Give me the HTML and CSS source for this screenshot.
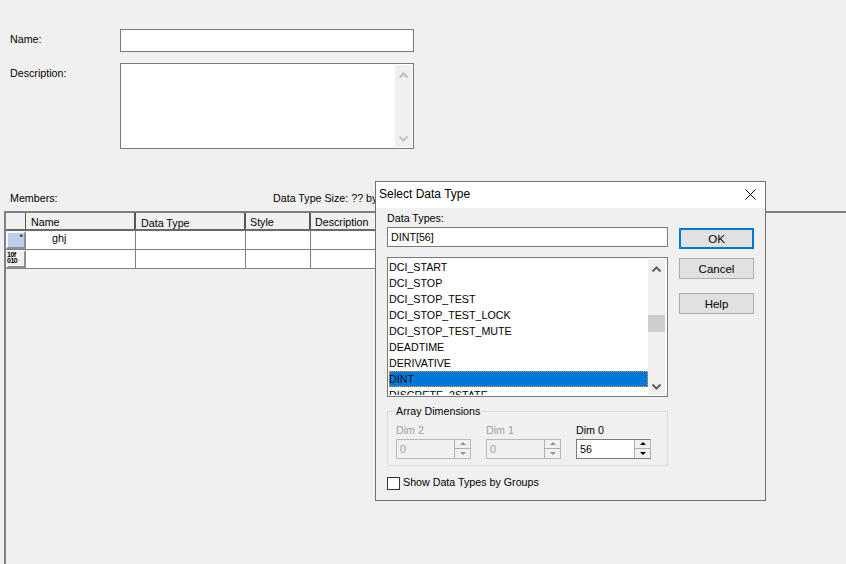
FILE: index.html
```html
<!DOCTYPE html>
<html lang="en">
  <head>
    <meta charset="UTF-8" />
    <title>New Data Type</title>
    <link rel="stylesheet" href="styles.css">
  </head>
  <body>
    <div class="form-row name-row">
      <label class="form-label">Name:</label>
      <div class="text-box name-box"></div>
    </div>
    <div class="form-row desc-row">
      <label class="form-label">Description:</label>
      <div class="text-box desc-box">
        <div class="scrollbar disabled">
          <svg width="11" height="7" viewBox="0 0 11 7"><path d="M1.5 5.5 5.5 1.5l4 4" /></svg>
          <svg width="11" height="7" viewBox="0 0 11 7"><path d="M1.5 1.5l4 4 4-4" /></svg>
        </div>
      </div>
    </div>

    <div class="members-head">
      <span class="members-label">Members:</span>
      <span class="size-label">Data Type Size: ?? by</span>
    </div>

    <div class="members">
      <div class="grid-row head-row">
        <div class="cell row-head"></div>
        <div class="cell col-name">Name</div>
        <div class="cell col-type"><span class="low">Data Type</span></div>
        <div class="cell col-style">Style</div>
        <div class="cell col-desc">Description</div>
      </div>
      <div class="grid-row">
        <div class="cell row-head current"><span class="star">*</span></div>
        <div class="cell col-name ghj">ghj</div>
        <div class="cell col-type"></div>
        <div class="cell col-style"></div>
        <div class="cell col-desc"></div>
      </div>
      <div class="grid-row">
        <div class="cell row-head"><span class="bits">10f<br>010</span></div>
        <div class="cell col-name"></div>
        <div class="cell col-type"></div>
        <div class="cell col-style"></div>
        <div class="cell col-desc"></div>
      </div>
    </div>

    <div class="dialog">
      <div class="title-bar">
        <span>Select Data Type</span>
        <svg class="close" width="11" height="11" viewBox="0 0 11 11"><path d="M.5.5l10 10M10.5.5l-10 10" /></svg>
      </div>
      <div class="dialog-body">
        <div class="dialog-main">
          <label class="types-label">Data Types:</label>
          <div class="text-box types-box">DINT[56]</div>
          <div class="text-box type-list">
            <ul class="types">
              <li>DCI_START</li>
              <li>DCI_STOP</li>
              <li>DCI_STOP_TEST</li>
              <li>DCI_STOP_TEST_LOCK</li>
              <li>DCI_STOP_TEST_MUTE</li>
              <li>DEADTIME</li>
              <li>DERIVATIVE</li>
              <li class="selected">DINT</li>
              <li>DISCRETE_2STATE</li>
            </ul>
            <div class="scrollbar list-scroll">
              <svg width="11" height="7" viewBox="0 0 11 7"><path d="M1.5 5.5 5.5 1.5l4 4" /></svg>
              <div class="thumb"></div>
              <svg width="11" height="7" viewBox="0 0 11 7"><path d="M1.5 1.5l4 4 4-4" /></svg>
            </div>
          </div>
          <fieldset class="dims">
            <legend>Array Dimensions</legend>
            <div class="dim off">
              <label>Dim 2</label>
              <div class="spin">
                <span class="spin-value">0</span>
                <div class="spin-btns"><i class="up"></i><i class="down"></i></div>
              </div>
            </div>
            <div class="dim off">
              <label>Dim 1</label>
              <div class="spin">
                <span class="spin-value">0</span>
                <div class="spin-btns"><i class="up"></i><i class="down"></i></div>
              </div>
            </div>
            <div class="dim">
              <label>Dim 0</label>
              <div class="spin">
                <span class="spin-value">56</span>
                <div class="spin-btns"><i class="up"></i><i class="down"></i></div>
              </div>
            </div>
          </fieldset>
          <div class="check-row">
            <span class="check"></span>
            <span class="check-label">Show Data Types by Groups</span>
          </div>
        </div>
        <div class="dialog-buttons">
          <button class="button default">OK</button>
          <button class="button">Cancel</button>
          <button class="button help">Help</button>
        </div>
      </div>
    </div>
  </body>
</html>
```

FILE: styles.css
```css
* {
  box-sizing: border-box;
}
html, body {
  height: 564px;
  overflow: hidden;
}
body {
  margin: 0;
  background: #f0f0f0;
  color: #000;
  font-family: "Liberation Sans", Arial, sans-serif;
  font-size: 10.7px;
}
.form-row {
  display: flex;
  padding-left: 10px;
}
.name-row {
  padding-top: 29px;
}
.desc-row {
  margin-top: 11px;
}
.form-label {
  width: 110px;
  padding-top: 4px;
}
.text-box {
  background: #fff;
  border: 1px solid #7a7a7a;
}
.name-box {
  width: 294px;
  height: 23px;
}
.desc-box {
  display: flex;
  justify-content: flex-end;
  width: 294px;
  height: 86px;
  padding: 1px;
}
.scrollbar {
  display: flex;
  flex-direction: column;
  justify-content: space-between;
  align-items: center;
  width: 17px;
  padding: 7px 0 5px;
  background: #f0f0f0;
}
.scrollbar svg {
  fill: none;
  stroke: #606060;
  stroke-width: 2;
}
.scrollbar.disabled svg {
  stroke: #c0c0c0;
}

.members-head {
  display: flex;
  height: 15px;
  margin-top: 42px;
  padding: 1px 0 0 10px;
}
.members-label {
  width: 263px;
}
.members {
  height: 360px;
  margin: 5px 0 0 4px;
  border-top: 2px solid #808080;
  border-left: 2px solid #808080;
}
.grid-row {
  display: flex;
  width: 700px;
  height: 19px;
  border-bottom: 1px solid #808080;
}
.head-row {
  height: 18px;
  border-bottom: 2px solid #696969;
}
.cell {
  height: 100%;
  padding: 1px 0 0 5px;
  border-right: 1px solid #808080;
  background: #fff;
}
.head-row .cell {
  padding-top: 3px;
  background: #f0f0f0;
  border-right: 2px solid #555;
}
.row-head {
  position: relative;
  width: 20px;
  padding: 0;
  background: #f0f0f0;
  border: 2px solid #f6f6f6;
  border-right-color: #909090;
  border-bottom-color: #909090;
}
.head-row .row-head {
  padding: 0;
  border: 0;
  border-right: 1px solid #555;
}
.current {
  background: #bccfeb;
}
.star {
  position: absolute;
  top: 0;
  right: 1px;
  font-size: 9px;
  line-height: 9px;
}
.bits {
  display: block;
  margin: 0 0 0 -1px;
  font-size: 7px;
  font-weight: bold;
  letter-spacing: -0.5px;
  line-height: 6px;
}
.col-name,
.col-type {
  width: 110px;
}
.col-style {
  width: 65px;
  padding-left: 4px;
}
.col-desc {
  width: 395px;
  padding-left: 4px;
}
.low {
  position: relative;
  top: 1px;
}
.ghj {
  padding-left: 26px;
}

.dialog {
  position: absolute;
  left: 375px;
  top: 181px;
  width: 391px;
  height: 320px;
  background: #f0f0f0;
  border: 1px solid #707070;
}
.title-bar {
  display: flex;
  justify-content: space-between;
  align-items: center;
  height: 26px;
  padding: 0 9px 2px 3px;
  background: #fff;
  font-size: 12px;
}
.close {
  fill: none;
  stroke: #000;
  stroke-width: 1;
}
.dialog-body {
  display: flex;
  padding: 4px 11px 0;
}
.dialog-main {
  width: 281px;
}
.types-label {
  display: block;
  height: 15px;
}
.types-box {
  height: 20px;
  padding: 3px 0 0 3px;
}
.type-list {
  display: flex;
  height: 140px;
  margin-top: 10px;
  padding: 1px;
  overflow: hidden;
}
.types {
  flex: 1;
  margin: 0;
  padding: 0;
  list-style: none;
  overflow: hidden;
}
.types li {
  height: 16px;
  line-height: 16px;
  white-space: nowrap;
}
.types .selected {
  background: #0078d7;
  outline: 1px dotted #ff9a1f;
  outline-offset: -1px;
  color: #111;
}
.list-scroll {
  position: relative;
  width: 17px;
  margin-right: 1px;
}
.thumb {
  position: absolute;
  left: 0;
  top: 56px;
  width: 100%;
  height: 17px;
  background: #cdcdcd;
}
.dims {
  display: flex;
  height: 60px;
  margin: 9px 0 0;
  padding: 6px 0 0 8px;
  border: 1px solid #dcdcdc;
}
.dims legend {
  margin-left: -1px;
  padding: 0 1px;
  line-height: 1;
}
.dim {
  width: 90px;
}
.dim label {
  display: block;
  height: 16px;
  padding-top: 1px;
}
.off {
  color: #a0a0a0;
}
.spin {
  display: flex;
  justify-content: space-between;
  width: 75px;
  height: 20px;
  background: #fff;
  border: 1px solid #7a7a7a;
  border-right-color: #b0b0b0;
}
.off .spin {
  background: #f0f0f0;
  border-color: #b8b8b8;
}
.spin-value {
  padding: 3px 0 0 3px;
}
.spin-btns {
  display: flex;
  flex-direction: column;
  width: 16px;
  background: #f0f0f0;
  border-left: 1px solid #b0b0b0;
}
.spin-btns i {
  display: flex;
  flex: 1;
  align-items: center;
  justify-content: center;
}
.spin-btns .up {
  border-bottom: 1px solid #b0b0b0;
}
.up::before,
.down::before {
  content: "";
  border-left: 3px solid transparent;
  border-right: 3px solid transparent;
}
.up::before {
  border-bottom: 3px solid #000;
}
.down::before {
  border-top: 3px solid #000;
}
.off .up::before {
  border-bottom-color: #909090;
}
.off .down::before {
  border-top-color: #909090;
}
.check-row {
  display: flex;
  align-items: center;
  gap: 3px;
  margin-top: 10px;
}
.check {
  width: 13px;
  height: 13px;
  background: #fff;
  border: 1px solid #333;
}
.check-label {
  padding-bottom: 2px;
}
.dialog-buttons {
  display: flex;
  flex-direction: column;
  gap: 9px;
  width: 75px;
  margin: 16px 0 0 11px;
}
.button {
  width: 75px;
  height: 21px;
  padding: 0;
  background: #e1e1e1;
  border: 1px solid #adadad;
  color: #000;
  font-family: "Liberation Sans", Arial, sans-serif;
  font-size: 11.5px;
}
.default {
  border: 2px solid #0078d7;
}
.help {
  margin-top: 5px;
}
```
